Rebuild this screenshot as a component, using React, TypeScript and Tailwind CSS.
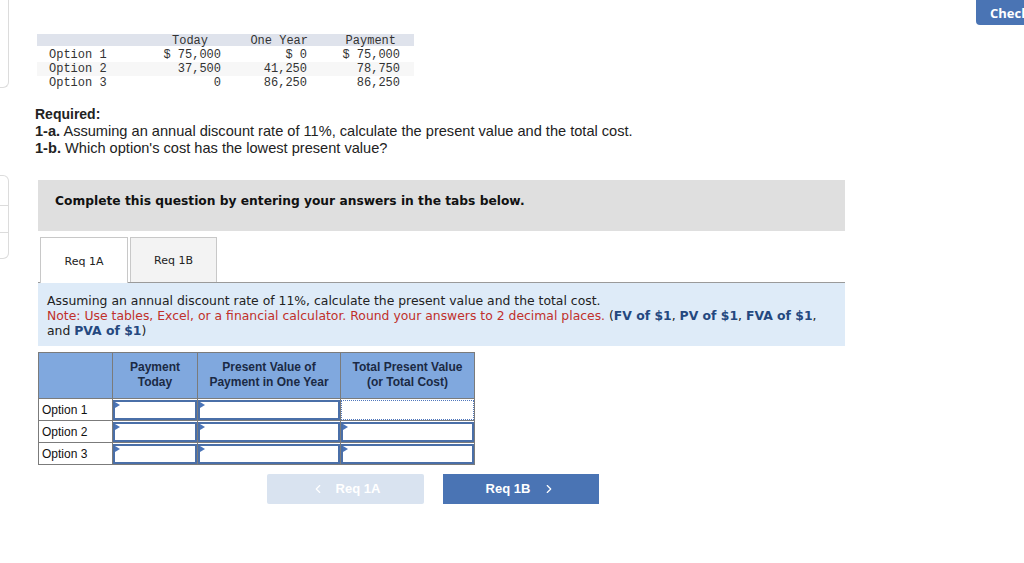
import { ChevronLeft, ChevronRight } from "lucide-react";

const mono = { fontFamily: '"Liberation Mono", "Courier New", monospace' };

const givenRows = [
  { label: "Option 1", today: "$ 75,000", year: "$ 0", pay: "$ 75,000" },
  { label: "Option 2", today: "37,500", year: "41,250", pay: "78,750" },
  { label: "Option 3", today: "0", year: "86,250", pay: "86,250" },
];

function InputCell({ dotted = false }: { dotted?: boolean }) {
  if (dotted) {
    return (
      <td className="h-[22px] border border-[#7b7b7b] p-0">
        <div className="h-[20px] w-full border border-dotted border-[#4f77bd] bg-white" />
      </td>
    );
  }
  return (
    <td className="h-[22px] border border-[#7b7b7b] p-0">
      <div className="relative h-[20px] w-full border-2 border-[#4a6fa8] bg-white">
        <span className="absolute left-0 top-0 h-0 w-0 border-y-[3px] border-l-[5px] border-y-transparent border-l-[#4a74b8]" />
      </div>
    </td>
  );
}

export default function App() {
  return (
    <div className="flex h-[563px] w-[1024px] overflow-hidden bg-white text-[#222]">
      {/* left edge side cards */}
      <div className="flex w-[9px] shrink-0 flex-col">
        <div className="h-[88px] rounded-br-[6px] border-b border-r border-[#dcdcdc]" />
        <div className="mt-[87px] flex flex-col rounded-r-[6px] border border-l-0 border-[#dcdcdc]">
          <div className="h-[30px] border-b border-[#dcdcdc]" />
          <div className="h-[27px] border-b border-[#dcdcdc]" />
          <div className="h-[25px]" />
        </div>
      </div>

      <main className="flex w-[836px] shrink-0 flex-col pl-[28px] pt-[34px]">
        {/* given data */}
        <div className="w-[377px] text-[12px] leading-[12px] text-[#333]" style={mono}>
          <div className="grid h-[12px] grid-cols-[113px_77px_86px_101px] bg-[#dfe3ec] pt-[1px]">
            <div />
            <div className="pr-[19px] text-right">Today</div>
            <div className="pr-[5px] text-right">One Year</div>
            <div className="pr-[18px] text-right">Payment</div>
          </div>
          <div className="pt-[2px]">
            {givenRows.map((r, i) => (
              <div
                key={r.label}
                className={`grid h-[14px] grid-cols-[113px_77px_86px_101px] items-center leading-[14px] ${
                  i === 1 ? "bg-[#f7f7f7]" : ""
                }`}
              >
                <div className="pl-[12px]">{r.label}</div>
                <div className="pr-[6px] text-right">{r.today}</div>
                <div className="pr-[6px] text-right">{r.year}</div>
                <div className="pr-[14px] text-right">{r.pay}</div>
              </div>
            ))}
          </div>
        </div>

        {/* required */}
        <div
          className="mt-[16px] -ml-[2px] text-[14.6px] leading-[17px] text-[#222]"
          style={{ fontFamily: '"Liberation Sans", Arial, sans-serif' }}
        >
          <p className="text-[14px] font-bold">Required:</p>
          <p>
            <b>1-a.</b> Assuming an annual discount rate of 11%, calculate the present value and the total cost.
          </p>
          <p>
            <b>1-b.</b> Which option's cost has the lowest present value?
          </p>
        </div>

        {/* instructions */}
        <div
          className="mt-[23px] ml-[1px] h-[51px] w-[807px] bg-[#dfdfdf] pl-[17px] pt-[14px] text-[12.25px] font-bold leading-[15px] text-[#111]"
          style={{ fontFamily: '"DejaVu Sans", Verdana, sans-serif' }}
        >
          Complete this question by entering your answers in the tabs below.
        </div>

        {/* tabs */}
        <div
          className="mt-[6px] ml-[1px] w-[807px] text-[11px] text-[#222]"
          style={{ fontFamily: '"DejaVu Sans", Verdana, sans-serif' }}
        >
          <div className="flex gap-[2px] border-b border-[#9a9a9a] pl-[2px]">
            <div className="-mb-px flex h-[46px] w-[88px] items-center justify-center border border-b-0 border-[#c8c8c8] bg-white pt-[3px]">
              Req 1A
            </div>
            <div className="flex h-[45px] w-[87px] items-center justify-center border border-b-0 border-[#c8c8c8] bg-[#f3f3f3] pt-[3px]">
              Req 1B
            </div>
          </div>

          <div className="h-[63px] bg-[#deebf8] pl-[9px] pr-[24px] pt-[10px] text-[12.4px] leading-[15px]">
            <p>Assuming an annual discount rate of 11%, calculate the present value and the total cost.</p>
            <p>
              <span className="text-[#c0302b]">
                Note: Use tables, Excel, or a financial calculator. Round your answers to 2 decimal places.
              </span>{" "}
              (<b className="text-[#24487f]">FV of $1</b>, <b className="text-[#24487f]">PV of $1</b>,{" "}
              <b className="text-[#24487f]">FVA of $1</b>, and <b className="text-[#24487f]">PVA of $1</b>)
            </p>
          </div>

          {/* answer table */}
          <table
            className="mt-[6px] border-collapse text-[12px] text-[#111]"
            style={{ fontFamily: '"Liberation Sans", Arial, sans-serif' }}
          >
            <colgroup>
              <col className="w-[74px]" />
              <col className="w-[85px]" />
              <col className="w-[143px]" />
              <col className="w-[134px]" />
            </colgroup>
            <thead>
              <tr className="h-[46px] bg-[#80a8de] text-[#1b2a44]">
                <th className="border border-[#7b7b7b]" />
                <th className="border border-[#7b7b7b] pb-[2px] font-bold leading-[15px]">
                  Payment
                  <br />
                  Today
                </th>
                <th className="border border-[#7b7b7b] pb-[2px] font-bold leading-[15px]">
                  Present Value of
                  <br />
                  Payment in One Year
                </th>
                <th className="border border-[#7b7b7b] pb-[2px] font-bold leading-[15px]">
                  Total Present Value
                  <br />
                  (or Total Cost)
                </th>
              </tr>
            </thead>
            <tbody>
              {["Option 1", "Option 2", "Option 3"].map((o, i) => (
                <tr key={o} className="h-[22px]">
                  <td className="border border-[#7b7b7b] pl-[3px] text-left">{o}</td>
                  <InputCell />
                  <InputCell />
                  <InputCell dotted={i === 0} />
                </tr>
              ))}
            </tbody>
          </table>

          {/* navigation */}
          <div
            className="ml-[229px] mt-[9px] flex gap-[19px] text-[13px] font-bold text-white"
            style={{ fontFamily: '"Liberation Sans", Arial, sans-serif' }}
          >
            <div className="flex h-[30px] w-[157px] items-center justify-center gap-[11px] rounded-[2px] bg-[#d9e3f0]">
              <ChevronLeft size={14} strokeWidth={2} />
              <span>Req 1A</span>
            </div>
            <div className="flex h-[30px] w-[156px] items-center justify-center gap-[12px] bg-[#4a74b4]">
              <span>Req 1B</span>
              <ChevronRight size={14} strokeWidth={2} />
            </div>
          </div>
        </div>
      </main>

      {/* check button */}
      <div className="flex flex-1 justify-end">
        <div
          className="-mr-[30px] flex h-[25px] w-[78px] shrink-0 items-start rounded-bl-[4px] bg-[#4a74b4] pl-[14px] pt-[4px] text-[13px] font-bold text-white"
          style={{ fontFamily: '"Open Sans", Lato, sans-serif' }}
        >
          Check
        </div>
      </div>
    </div>
  );
}
